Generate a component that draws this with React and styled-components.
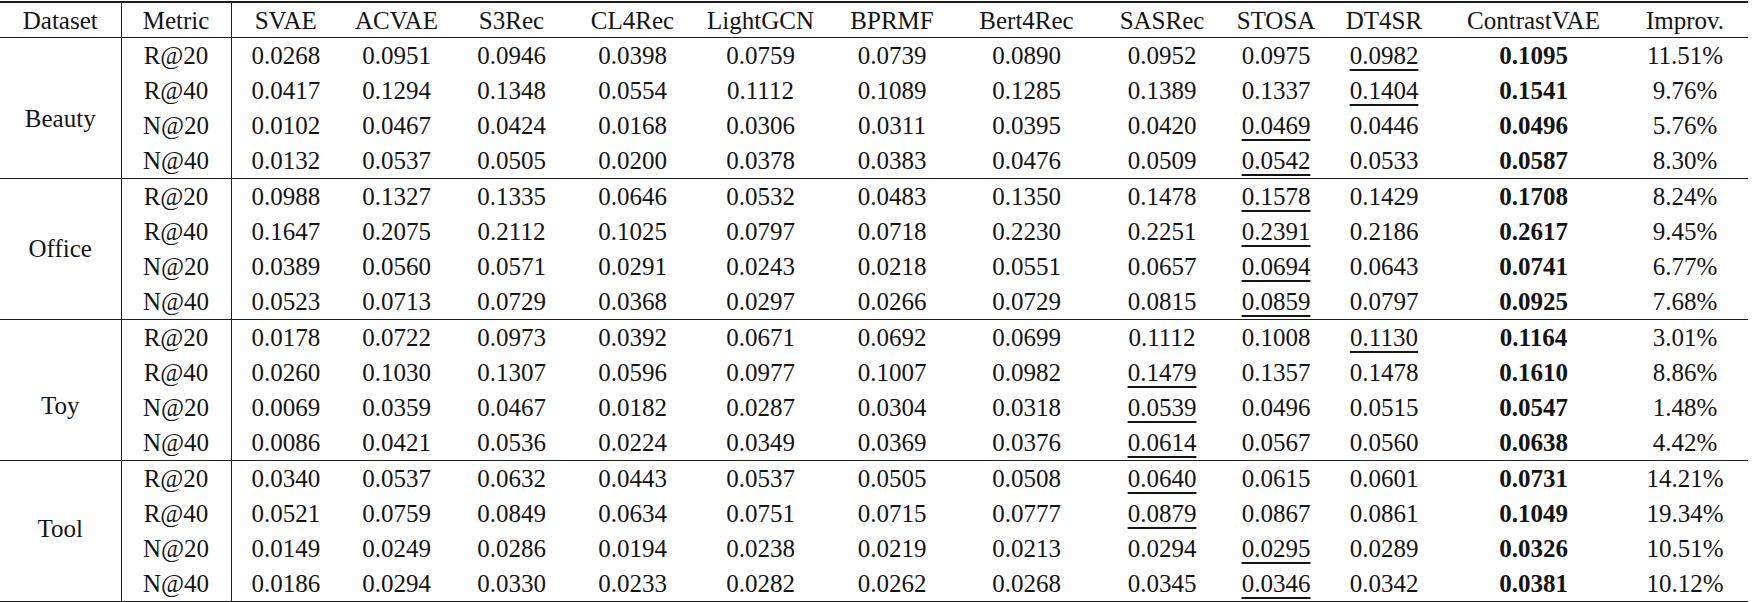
import React from "react";
import styled, { createGlobalStyle } from "styled-components";

const GlobalStyle = createGlobalStyle`
    html, body {
        margin: 0;
        padding: 0;
        background: #ffffff;
    }
`;

const Page = styled.div`
    width: 1752px;
    height: 602px;
    padding-top: 1px;
    box-sizing: border-box;
    overflow: hidden;
`;

const Table = styled.table`
    width: 1748px;
    border-collapse: collapse;
    table-layout: fixed;
    border-top: 2px solid #1c1c1c;
    border-bottom: 2px solid #1c1c1c;
    font-family: "Liberation Serif", "Times New Roman", serif;
    font-size: 25px;
    line-height: 1;
    color: #141414;
`;

const HeadCell = styled.th`
    height: 34px;
    padding: 0;
    font-family: inherit;
    font-weight: normal;
    text-align: center;
    vertical-align: middle;
    border-bottom: 1px solid #1c1c1c;
    border-right: ${p => (p.$divider ? "1px solid #1c1c1c" : "none")};
`;

const Row = styled.tr`
    border-top: ${p => (p.$first ? "1px solid #1c1c1c" : "none")};
`;

// $shift nudges the dataset name off the exact middle of its four rows
const GroupCell = styled.td`
    padding: ${p => (p.$shift >= 0 ? `${p.$shift * 2}px 0 0 0` : `0 0 ${-p.$shift * 2}px 0`)};
    font-family: inherit;
    text-align: center;
    vertical-align: middle;
    border-right: 1px solid #1c1c1c;
`;

const MetricCell = styled.td`
    height: 35px;
    padding: 0;
    font-family: inherit;
    text-align: center;
    vertical-align: middle;
    border-right: 1px solid #1c1c1c;
`;

const Cell = styled.td`
    padding: 0;
    font-family: inherit;
    text-align: center;
    vertical-align: middle;
    font-weight: ${p => (p.$best ? "bold" : "normal")};
`;

const Second = styled.span`
    text-decoration: underline;
    text-decoration-thickness: 1.5px;
    text-underline-offset: 5px;
`;

const widths = [121, 110, 109, 113, 117, 125, 131, 132, 137, 134, 94, 122, 177, 126];

const models = [
    "SVAE",
    "ACVAE",
    "S3Rec",
    "CL4Rec",
    "LightGCN",
    "BPRMF",
    "Bert4Rec",
    "SASRec",
    "STOSA",
    "DT4SR",
    "ContrastVAE",
];

// third entry: index (in values) of the runner-up, shown underlined
const groups = [
    {
        name: "Beauty",
        shift: 10,
        rows: [
            ["R@20", ["0.0268", "0.0951", "0.0946", "0.0398", "0.0759", "0.0739", "0.0890", "0.0952", "0.0975", "0.0982", "0.1095"], 9, "11.51%"],
            ["R@40", ["0.0417", "0.1294", "0.1348", "0.0554", "0.1112", "0.1089", "0.1285", "0.1389", "0.1337", "0.1404", "0.1541"], 9, "9.76%"],
            ["N@20", ["0.0102", "0.0467", "0.0424", "0.0168", "0.0306", "0.0311", "0.0395", "0.0420", "0.0469", "0.0446", "0.0496"], 8, "5.76%"],
            ["N@40", ["0.0132", "0.0537", "0.0505", "0.0200", "0.0378", "0.0383", "0.0476", "0.0509", "0.0542", "0.0533", "0.0587"], 8, "8.30%"],
        ],
    },
    {
        name: "Office",
        shift: -1,
        rows: [
            ["R@20", ["0.0988", "0.1327", "0.1335", "0.0646", "0.0532", "0.0483", "0.1350", "0.1478", "0.1578", "0.1429", "0.1708"], 8, "8.24%"],
            ["R@40", ["0.1647", "0.2075", "0.2112", "0.1025", "0.0797", "0.0718", "0.2230", "0.2251", "0.2391", "0.2186", "0.2617"], 8, "9.45%"],
            ["N@20", ["0.0389", "0.0560", "0.0571", "0.0291", "0.0243", "0.0218", "0.0551", "0.0657", "0.0694", "0.0643", "0.0741"], 8, "6.77%"],
            ["N@40", ["0.0523", "0.0713", "0.0729", "0.0368", "0.0297", "0.0266", "0.0729", "0.0815", "0.0859", "0.0797", "0.0925"], 8, "7.68%"],
        ],
    },
    {
        name: "Toy",
        shift: 15,
        rows: [
            ["R@20", ["0.0178", "0.0722", "0.0973", "0.0392", "0.0671", "0.0692", "0.0699", "0.1112", "0.1008", "0.1130", "0.1164"], 9, "3.01%"],
            ["R@40", ["0.0260", "0.1030", "0.1307", "0.0596", "0.0977", "0.1007", "0.0982", "0.1479", "0.1357", "0.1478", "0.1610"], 7, "8.86%"],
            ["N@20", ["0.0069", "0.0359", "0.0467", "0.0182", "0.0287", "0.0304", "0.0318", "0.0539", "0.0496", "0.0515", "0.0547"], 7, "1.48%"],
            ["N@40", ["0.0086", "0.0421", "0.0536", "0.0224", "0.0349", "0.0369", "0.0376", "0.0614", "0.0567", "0.0560", "0.0638"], 7, "4.42%"],
        ],
    },
    {
        name: "Tool",
        shift: -3,
        rows: [
            ["R@20", ["0.0340", "0.0537", "0.0632", "0.0443", "0.0537", "0.0505", "0.0508", "0.0640", "0.0615", "0.0601", "0.0731"], 7, "14.21%"],
            ["R@40", ["0.0521", "0.0759", "0.0849", "0.0634", "0.0751", "0.0715", "0.0777", "0.0879", "0.0867", "0.0861", "0.1049"], 7, "19.34%"],
            ["N@20", ["0.0149", "0.0249", "0.0286", "0.0194", "0.0238", "0.0219", "0.0213", "0.0294", "0.0295", "0.0289", "0.0326"], 8, "10.51%"],
            ["N@40", ["0.0186", "0.0294", "0.0330", "0.0233", "0.0282", "0.0262", "0.0268", "0.0345", "0.0346", "0.0342", "0.0381"], 8, "10.12%"],
        ],
    },
];

const App = () => {
    return (
        <Page>
            <GlobalStyle />
            <Table>
                <colgroup>
                    {widths.map((w, i) => (
                        <col key={i} style={{ width: w }} />
                    ))}
                </colgroup>
                <thead>
                    <tr>
                        <HeadCell $divider>Dataset</HeadCell>
                        <HeadCell $divider>Metric</HeadCell>
                        {models.map(m => (
                            <HeadCell key={m}>{m}</HeadCell>
                        ))}
                        <HeadCell>Improv.</HeadCell>
                    </tr>
                </thead>
                <tbody>
                    {groups.map(group =>
                        group.rows.map(([metric, values, second, improv], r) => (
                            <Row key={group.name + metric} $first={r === 0}>
                                {r === 0 && (
                                    <GroupCell rowSpan={4} $shift={group.shift}>
                                        {group.name}
                                    </GroupCell>
                                )}
                                <MetricCell>{metric}</MetricCell>
                                {values.map((v, i) => (
                                    <Cell key={i} $best={i === values.length - 1}>
                                        {i === second ? <Second>{v}</Second> : v}
                                    </Cell>
                                ))}
                                <Cell>{improv}</Cell>
                            </Row>
                        ))
                    )}
                </tbody>
            </Table>
        </Page>
    );
};

export default App;
